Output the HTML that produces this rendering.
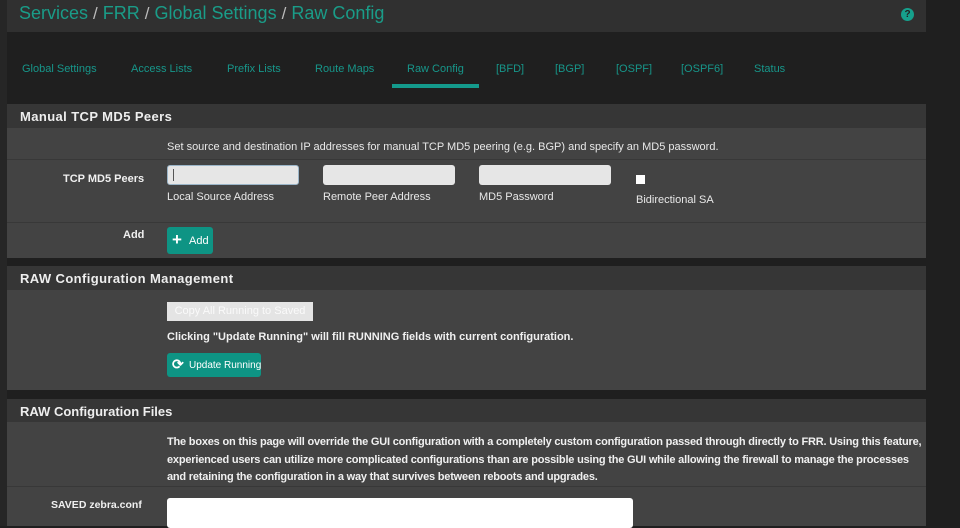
<!DOCTYPE html>
<html><head><meta charset="utf-8"><style>
*{margin:0;padding:0;box-sizing:border-box}
body{width:960px;height:526px;overflow:hidden;background:#1f1f1f;font-family:"Liberation Sans",sans-serif;position:relative;color:#ddd}
.a{position:absolute;white-space:nowrap}
.hdr{left:7px;top:0;width:919px;height:32px;background:#303030}
.bc{left:19px;top:3px;font-size:18px;color:#1a9c88}
.bc span{color:#bbb;font-size:17px}
.tab{top:63px;font-size:11px;color:#17968a}
.ph{background:#363636;left:7px;width:919px;height:24px}
.pht{left:20px;font-size:13px;font-weight:bold;color:#eee;letter-spacing:.4px}
.pb{background:#434343;left:7px;width:919px}
.ln{left:7px;width:919px;height:1px;background:#383838}
.t{font-size:11px;color:#e8e8e8}
.lb{font-size:11px;font-weight:bold;color:#f0f0f0}
.in{background:#e6e6e6;border-radius:3px;height:20px;width:132px;top:165px}
.btn{background:#0e9484;border-radius:3px;color:#fff;font-size:10px}
</style></head><body>
<div class="a" style="left:0;top:0;width:7px;height:526px;background:#262626"></div>
<div class="a hdr"></div>
<div class="a bc">Services <span>/</span> FRR <span>/</span> Global Settings <span>/</span> Raw Config</div>
<div class="a" style="left:901px;top:8px;width:13px;height:13px;border-radius:50%;background:#16a08c;color:#222;font-size:10px;font-weight:bold;text-align:center;line-height:13px">?</div>
<div class="a tab" style="left:22px">Global Settings</div>
<div class="a tab" style="left:131px">Access Lists</div>
<div class="a tab" style="left:227px">Prefix Lists</div>
<div class="a tab" style="left:315px">Route Maps</div>
<div class="a tab" style="left:407px">Raw Config</div>
<div class="a" style="left:392px;top:84px;width:87px;height:4px;background:#149a8c"></div>
<div class="a tab" style="left:496px">[BFD]</div>
<div class="a tab" style="left:555px">[BGP]</div>
<div class="a tab" style="left:616px">[OSPF]</div>
<div class="a tab" style="left:681px">[OSPF6]</div>
<div class="a tab" style="left:754px">Status</div>

<div class="a ph" style="top:104px"></div>
<div class="a pht" style="top:109px">Manual TCP MD5 Peers</div>
<div class="a pb" style="top:128px;height:130px"></div>
<div class="a ln" style="top:159px"></div>
<div class="a ln" style="top:222px"></div>
<div class="a t" style="left:167px;top:141px">Set source and destination IP addresses for manual TCP MD5 peering (e.g. BGP) and specify an MD5 password.</div>
<div class="a lb" style="left:63px;top:173px">TCP MD5 Peers</div>
<div class="a in" style="left:167px;border:1px solid #9bb5c8"><div style="position:absolute;left:5px;top:3px;width:1px;height:12px;background:#555"></div></div>
<div class="a in" style="left:323px"></div>
<div class="a in" style="left:479px"></div>
<div class="a" style="left:636px;top:175px;width:9px;height:9px;background:#fff"></div>
<div class="a t" style="left:167px;top:191px">Local Source Address</div>
<div class="a t" style="left:323px;top:191px">Remote Peer Address</div>
<div class="a t" style="left:479px;top:191px">MD5 Password</div>
<div class="a t" style="left:636px;top:194px">Bidirectional SA</div>
<div class="a lb" style="left:123px;top:229px">Add</div>
<div class="a btn" style="left:167px;top:227px;width:46px;height:27px"><span style="position:absolute;left:5px;top:3px;font-size:17px;font-weight:bold">+</span><span style="position:absolute;left:22px;top:8px;font-size:11px">Add</span></div>

<div class="a ph" style="top:266px"></div>
<div class="a pht" style="top:271px">RAW Configuration Management</div>
<div class="a pb" style="top:290px;height:100px"></div>
<div class="a" style="left:167px;top:302px;width:146px;height:19px;background:#e4e4e4;color:#fafafa;font-size:11px;text-align:center;line-height:19px">Copy All Running to Saved</div>
<div class="a lb" style="left:167px;top:331px">Clicking "Update Running" will fill RUNNING fields with current configuration.</div>
<div class="a btn" style="left:167px;top:353px;width:94px;height:24px"><span style="position:absolute;left:5px;top:3px;font-size:14px;font-weight:bold">⟳</span><span style="position:absolute;left:22px;top:7px">Update Running</span></div>

<div class="a ph" style="top:399px"></div>
<div class="a pht" style="top:404px;letter-spacing:0">RAW Configuration Files</div>
<div class="a pb" style="top:422px;height:104px"></div>
<div class="a ln" style="top:486px"></div>
<div class="a lb" style="left:167px;top:434px;line-height:17.5px;font-size:11px;letter-spacing:-.2px">The boxes on this page will override the GUI configuration with a completely custom configuration passed through directly to FRR. Using this feature,<br>experienced users can utilize more complicated configurations than are possible using the GUI while allowing the firewall to manage the processes<br>and retaining the configuration in a way that survives between reboots and upgrades.</div>
<div class="a lb" style="left:51px;top:499px;font-size:10.5px">SAVED zebra.conf</div>
<div class="a" style="left:167px;top:498px;width:466px;height:30px;background:#fff;border-radius:3px"></div>
</body></html>
